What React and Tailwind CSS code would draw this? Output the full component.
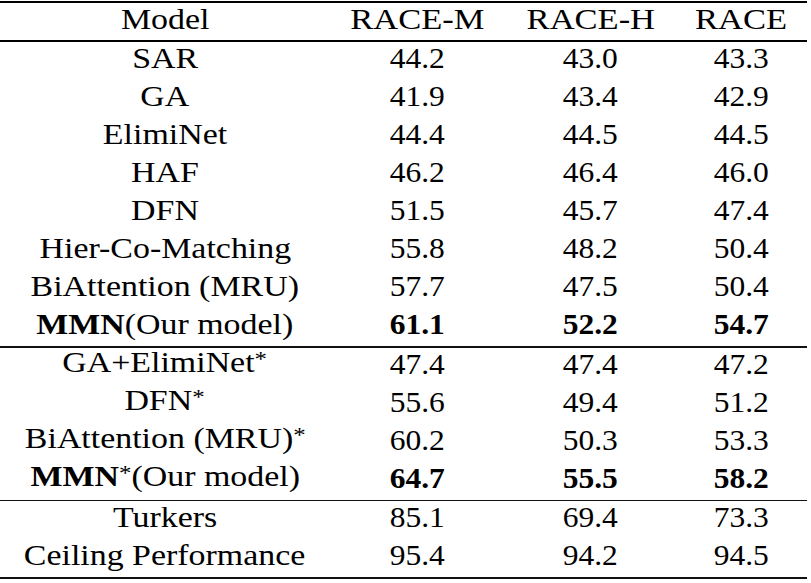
import React from "react";

const Star = () => (
  <span className="relative -top-[6px] text-[22px] font-normal">*</span>
);

const groups = [
  [
    ["SAR", "44.2", "43.0", "43.3"],
    ["GA", "41.9", "43.4", "42.9"],
    ["ElimiNet", "44.4", "44.5", "44.5"],
    ["HAF", "46.2", "46.4", "46.0"],
    ["DFN", "51.5", "45.7", "47.4"],
    ["Hier-Co-Matching", "55.8", "48.2", "50.4"],
    ["BiAttention (MRU)", "57.7", "47.5", "50.4"],
    [
      <>
        <b>MMN</b>(Our model)
      </>,
      "61.1",
      "52.2",
      "54.7",
      true,
    ],
  ],
  [
    [
      <>
        GA+ElimiNet
        <Star />
      </>,
      "47.4",
      "47.4",
      "47.2",
    ],
    [
      <>
        DFN
        <Star />
      </>,
      "55.6",
      "49.4",
      "51.2",
    ],
    [
      <>
        BiAttention (MRU)
        <Star />
      </>,
      "60.2",
      "50.3",
      "53.3",
    ],
    [
      <>
        <b>MMN</b>
        <Star />
        (Our model)
      </>,
      "64.7",
      "55.5",
      "58.2",
      true,
    ],
  ],
  [
    ["Turkers", "85.1", "69.4", "73.3"],
    ["Ceiling Performance", "95.4", "94.2", "94.5"],
  ],
];

function Cell({ children, bold, kind }) {
  const scale =
    kind === "head"
      ? "scale-x-[1.15]"
      : kind === "name"
      ? "scale-x-[1.13]"
      : "scale-x-[1.05]";
  return (
    <div className="flex items-center justify-center pb-[6px] leading-[30px] overflow-visible">
      <span
        className={
          "inline-block whitespace-nowrap leading-[30px] " +
          scale +
          " " +
          (bold ? "font-bold" : "font-normal")
        }
      >
        {children}
      </span>
    </div>
  );
}

const Rule = ({ thick }) => (
  <div className={thick ? "h-[2px] bg-black" : "h-[1.5px] bg-[#111]"} />
);

const cols = "grid grid-cols-[330px_175px_171px_131px] grid-rows-[38px] h-[38px]";

export default function App() {
  return (
    <div className="w-[811px] h-[583px] bg-white text-black pt-[1px] font-['Liberation_Serif','Times_New_Roman',serif]">
      <div className="flex flex-col w-[807px] text-[30px] leading-[30px]">
        <Rule thick />
        <div className="grid grid-cols-[330px_175px_171px_131px] grid-rows-[37px] h-[37px]">
          <Cell kind="name">Model</Cell>
          <Cell kind="head">RACE-M</Cell>
          <Cell kind="head">RACE-H</Cell>
          <Cell kind="head">RACE</Cell>
        </div>
        <Rule thick />
        {groups.map((rows, gi) => (
          <React.Fragment key={gi}>
            {rows.map((r, ri) => (
              <div key={ri} className={cols}>
                <Cell kind="name">{r[0]}</Cell>
                <Cell bold={r[4]}>{r[1]}</Cell>
                <Cell bold={r[4]}>{r[2]}</Cell>
                <Cell bold={r[4]}>{r[3]}</Cell>
              </div>
            ))}
            <Rule />
          </React.Fragment>
        ))}
      </div>
    </div>
  );
}
